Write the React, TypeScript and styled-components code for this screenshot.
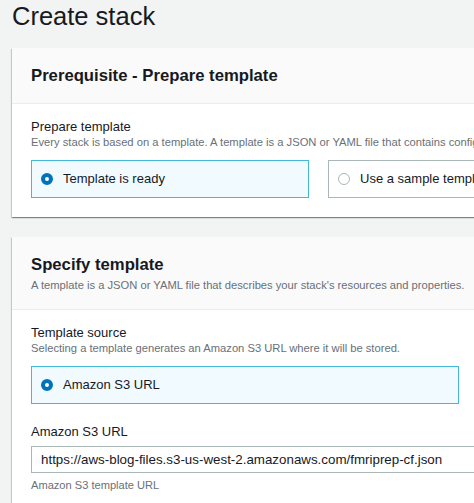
import React from "react";
import styled, { createGlobalStyle } from "styled-components";

const GlobalStyle = createGlobalStyle`
  html, body {
    margin: 0;
    padding: 0;
    background: #f2f3f3;
    overflow: hidden;
  }
  body {
    font-family: "Liberation Sans", Arial, sans-serif;
    color: #16191f;
  }
  * { box-sizing: border-box; }
`;

const Page = styled.div`
  width: 900px;
  padding: 1px 0 40px 12px;
`;

const Title = styled.h1`
  margin: 0;
  font-size: 25.5px;
  line-height: 30px;
  font-weight: 400;
  color: #16191f;
`;

const Card = styled.section<{ $gap: number }>`
  margin-top: ${(p) => p.$gap}px;
  width: 760px;
  background: #ffffff;
  box-shadow: 0 1px 1px 0 rgba(0, 28, 36, 0.3),
    1px 1px 1px 0 rgba(0, 28, 36, 0.15),
    -1px 1px 1px 0 rgba(0, 28, 36, 0.15);
`;

const CardHeader = styled.header`
  background: #fafafa;
  border-bottom: 1px solid #eaeded;
  padding: 17px 19px 17px;
`;

const HeaderTitle = styled.h2`
  margin: 0;
  font-size: 16.7px;
  line-height: 21px;
  font-weight: 700;
  color: #16191f;
`;

const HeaderDesc = styled.p`
  margin: 3px 0 0;
  font-size: 11.2px;
  line-height: 14px;
  color: #687078;
  white-space: nowrap;
`;

const CardBody = styled.div`
  padding: 15px 19px 19px;
`;

const Label = styled.div<{ $top?: number }>`
  margin-top: ${(p) => p.$top ?? 0}px;
  font-size: 13px;
  line-height: 16px;
  color: #16191f;
`;

const Description = styled.div`
  font-size: 11.2px;
  line-height: 14px;
  color: #687078;
  white-space: nowrap;
`;

const TileGroup = styled.div`
  display: flex;
  gap: 19px;
  margin-top: 11px;
`;

const Tile = styled.label<{ $selected?: boolean; $width: number }>`
  flex: none;
  display: flex;
  align-items: center;
  gap: 10px;
  width: ${(p) => p.$width}px;
  height: 38px;
  padding: 0 9px;
  border: 1px solid ${(p) => (p.$selected ? "#44b9d6" : "#aab7b8")};
  background: ${(p) => (p.$selected ? "#f1faff" : "#ffffff")};
  cursor: pointer;
`;

const Radio = styled.span<{ $checked?: boolean }>`
  flex: none;
  width: 12px;
  height: 12px;
  border-radius: 50%;
  background: #ffffff;
  border: ${(p) => (p.$checked ? "4px solid #0073bb" : "1px solid #aab7b8")};
`;

const TileText = styled.span`
  font-size: 13px;
  line-height: 16px;
  color: #16191f;
  white-space: nowrap;
`;

const UrlInput = styled.input`
  display: block;
  margin-top: 6px;
  width: 720px;
  height: 27px;
  padding: 0 9px;
  border: 1px solid #aab7b8;
  border-radius: 0;
  background: #ffffff;
  font-family: "Liberation Sans", Arial, sans-serif;
  font-size: 13.35px;
  color: #16191f;
  outline: none;
`;

const Constraint = styled.div`
  margin-top: 5px;
  font-size: 11.1px;
  line-height: 14px;
  color: #687078;
`;

export default function App() {
  return (
    <>
      <GlobalStyle />
      <Page>
        <Title>Create stack</Title>

        <Card $gap={17}>
          <CardHeader>
            <HeaderTitle>Prerequisite - Prepare template</HeaderTitle>
          </CardHeader>
          <CardBody>
            <Label>Prepare template</Label>
            <Description>
              Every stack is based on a template. A template is a JSON or YAML file that contains configuration information about the AWS resources you want to include in the stack.
            </Description>
            <TileGroup>
              <Tile $selected $width={278}>
                <Radio $checked />
                <TileText>Template is ready</TileText>
              </Tile>
              <Tile $width={278}>
                <Radio />
                <TileText>Use a sample template</TileText>
              </Tile>
              <Tile $width={278}>
                <Radio />
                <TileText>Create template in Designer</TileText>
              </Tile>
            </TileGroup>
          </CardBody>
        </Card>

        <Card $gap={20}>
          <CardHeader>
            <HeaderTitle>Specify template</HeaderTitle>
            <HeaderDesc>
              A template is a JSON or YAML file that describes your stack's resources and properties.
            </HeaderDesc>
          </CardHeader>
          <CardBody>
            <Label>Template source</Label>
            <Description>
              Selecting a template generates an Amazon S3 URL where it will be stored.
            </Description>
            <TileGroup>
              <Tile $selected $width={428}>
                <Radio $checked />
                <TileText>Amazon S3 URL</TileText>
              </Tile>
              <Tile $width={428}>
                <Radio />
                <TileText>Upload a template file</TileText>
              </Tile>
            </TileGroup>
            <Label $top={20}>Amazon S3 URL</Label>
            <UrlInput
              readOnly
              defaultValue="https://aws-blog-files.s3-us-west-2.amazonaws.com/fmriprep-cf.json"
            />
            <Constraint>Amazon S3 template URL</Constraint>
          </CardBody>
        </Card>
      </Page>
    </>
  );
}
